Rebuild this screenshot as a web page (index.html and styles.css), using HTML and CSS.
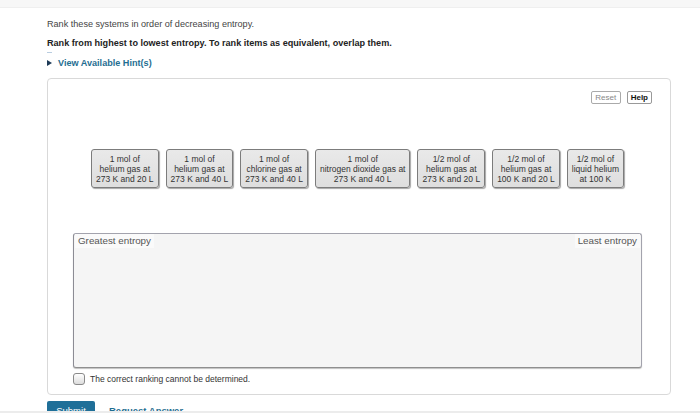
FILE: index.html
```html
<!DOCTYPE html>
<html lang="en">
<head>
<meta charset="utf-8">
<title>Rank entropy</title>
<link rel="stylesheet" href="styles.css">
</head>
<body>
<div class="topbar"></div>
<div class="content">
  <p class="intro">Rank these systems in order of decreasing entropy.</p>
  <p class="instr">Rank from highest to lowest entropy. To rank items as equivalent, overlap them.</p>
  <div class="dash"></div>
  <div class="hint"><span class="tri"></span><span class="hint-text">View Available Hint(s)</span></div>
  <div class="panel">
    <div class="toolbar">
      <span class="btn reset">Reset</span>
      <span class="btn help">Help</span>
    </div>
    <div class="stage">
      <div class="pool">
        <div class="card">1 mol of<br>helium gas at<br>273 K and 20 L</div>
        <div class="card">1 mol of<br>helium gas at<br>273 K and 40 L</div>
        <div class="card">1 mol of<br>chlorine gas at<br>273 K and 40 L</div>
        <div class="card">1 mol of<br>nitrogen dioxide gas at<br>273 K and 40 L</div>
        <div class="card">1/2 mol of<br>helium gas at<br>273 K and 20 L</div>
        <div class="card">1/2 mol of<br>helium gas at<br>100 K and 20 L</div>
        <div class="card">1/2 mol of<br>liquid helium<br>at 100 K</div>
      </div>
      <div class="rank">
        <span class="label">Greatest entropy</span>
        <span class="label">Least entropy</span>
      </div>
      <label class="check"><span class="box"></span><span>The correct ranking cannot be determined.</span></label>
    </div>
  </div>
  <div class="actions">
    <span class="submit">Submit</span>
    <span class="request">Request Answer</span>
  </div>
</div>
<div class="bottomline"></div>
</body>
</html>
```

FILE: styles.css
```css
html, body {
  margin: 0;
  padding: 0;
  background: #fff;
  height: 413px;
  overflow: hidden;
}
body {
  font-family: "Liberation Sans", Arial, Helvetica, sans-serif;
  color: #333;
}
.topbar {
  height: 7px;
  background: #f7f7f7;
  border-bottom: 1px solid #efefef;
}
.content {
  padding: 0 29px 0 47px;
}
.intro {
  margin: 10px 0 0;
  font-size: 9.1px;
  line-height: 12px;
  color: #444;
}
.instr {
  margin: 7px 0 0;
  font-size: 9.1px;
  line-height: 12px;
  font-weight: bold;
  color: #222;
}
.dash {
  margin-top: 3px;
  width: 5px;
  height: 1px;
  background: #b9cde0;
}
.hint {
  margin-top: 4px;
  height: 12px;
  display: flex;
  align-items: center;
}
.tri {
  width: 0;
  height: 0;
  border-top: 3.5px solid transparent;
  border-bottom: 3.5px solid transparent;
  border-left: 5px solid #1d3a57;
  margin-right: 6px;
}
.hint-text {
  font-size: 9.1px;
  font-weight: bold;
  color: #1f6e91;
}
.panel {
  margin-top: 9px;
  border: 1px solid #d9d9d9;
  border-radius: 4px;
  padding: 12px 0 9px;
}
.toolbar {
  display: flex;
  justify-content: flex-end;
  gap: 6px;
  padding-right: 18px;
}
.btn {
  height: 11px;
  line-height: 11px;
  font-size: 8px;
  padding: 0 3px;
  border: 1px solid #aaa;
  border-radius: 2px;
  background: #fff;
}
.reset {
  color: #888;
  width: 22px;
  text-align: center;
}
.help {
  color: #111;
  font-weight: bold;
  border-color: #999;
}
.stage {
  margin: 0 28px 0 25px;
}
.pool {
  margin-top: 45px;
  display: flex;
  justify-content: center;
  gap: 7px;
}
.card {
  background: linear-gradient(#e9e9e9, #dedede);
  border: 1px solid #7c7c7c;
  border-radius: 3px;
  box-shadow: 1px 1px 1px rgba(0, 0, 0, 0.35);
  font-size: 8.5px;
  line-height: 10px;
  padding: 4px 4px 3px;
  text-align: center;
  color: #333;
  white-space: nowrap;
}
.rank {
  margin-top: 45px;
  height: 133px;
  background: #f5f5f5;
  border: 1px solid #a3a3ad;
  border-left-color: #8c8c94;
  border-bottom-color: #8f8f8f;
  border-radius: 3px;
  box-shadow: 0 1px 1px rgba(0, 0, 0, 0.25);
  display: flex;
  justify-content: space-between;
  align-items: flex-start;
}
.label {
  background: #fafafa;
  color: #555;
  font-size: 9.8px;
  line-height: 14px;
  padding: 0 3px;
  margin: 0 1px;
}
.check {
  margin-top: 5px;
  display: flex;
  align-items: center;
  gap: 5px;
  font-size: 8.5px;
  color: #333;
  height: 12px;
}
.box {
  width: 10px;
  height: 10px;
  border: 1px solid #8a8a8a;
  border-radius: 3px;
  background: linear-gradient(#fff, #dcdcdc);
}
.actions {
  margin-top: 6px;
  display: flex;
  align-items: flex-start;
  gap: 14px;
}
.submit {
  width: 48px;
  height: 20px;
  line-height: 20px;
  background: #1f6f98;
  color: #fff;
  font-size: 9.5px;
  text-align: center;
  border-radius: 2px;
}
.request {
  line-height: 20px;
  font-size: 9.5px;
  font-weight: bold;
  color: #1f6e91;
}
.bottomline {
  position: fixed;
  left: 0;
  right: 0;
  top: 411px;
  height: 2px;
  background: #ececec;
}
```
